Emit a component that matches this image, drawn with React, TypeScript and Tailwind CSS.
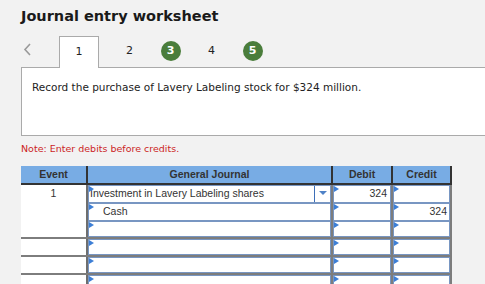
import React from "react";

const Marker = () => (
  <svg className="absolute left-0 top-0" width="5" height="6" viewBox="0 0 5 6">
    <polygon points="0,0 5,3 0,6" fill="#3d7fd6" />
  </svg>
);

type Row = { ev: string; acct: string; indent?: boolean; debit: string; credit: string; select?: boolean };

const rows: Row[] = [
  { ev: "1", acct: "Investment in Lavery Labeling shares", debit: "324", credit: "", select: true },
  { ev: "", acct: "Cash", indent: true, debit: "", credit: "324" },
  { ev: "", acct: "", debit: "", credit: "" },
  { ev: "", acct: "", debit: "", credit: "" },
  { ev: "", acct: "", debit: "", credit: "" },
  { ev: "", acct: "", debit: "", credit: "" },
];

const Cell = ({ children, className = "" }: { children?: React.ReactNode; className?: string }) => (
  <div className={"relative h-full bg-white border border-[#7896c2] flex items-center " + className}>
    <Marker />
    {children}
  </div>
);

export default function App() {
  return (
    <div className="w-[485px] h-[284px] overflow-hidden bg-[#f2f2f2] pl-[21px] pt-[6px]" style={{ fontFamily: "Verdana, 'DejaVu Sans', sans-serif" }}>
      <div className="text-[14.5px] font-bold text-[#1a1a1a] leading-[20px]">Journal entry worksheet</div>
      <div className="flex items-end h-[32px] mt-[9px] text-[11px] text-[#222]">
        <div className="w-[38px] h-full flex items-center pl-[2px] pb-[4px]">
          <svg width="9" height="13" viewBox="0 0 9 13">
            <polyline points="7,1 2,6.5 7,12" fill="none" stroke="#9a9a9a" strokeWidth="1.6" />
          </svg>
        </div>
        <div className="w-[40px] h-full bg-white border border-b-0 border-[#aaaaaa] flex items-center justify-center relative top-[1px] z-10">1</div>
        <div className="ml-[10px] w-[41px] h-full flex items-center justify-center">2</div>
        <div className="w-[41px] h-full flex items-center justify-center">
          <div className="w-[20px] h-[20px] rounded-full bg-[#4a7d3b] text-white font-bold flex items-center justify-center">3</div>
        </div>
        <div className="w-[41px] h-full flex items-center justify-center">4</div>
        <div className="w-[41px] h-full flex items-center justify-center">
          <div className="w-[20px] h-[20px] rounded-full bg-[#4a7d3b] text-white font-bold flex items-center justify-center">5</div>
        </div>
      </div>
      <div className="h-[69px] bg-white border border-r-0 border-[#aaaaaa] pl-[10px] pt-[12px] text-[10.5px] text-[#222]">
        Record the purchase of Lavery Labeling stock for $324 million.
      </div>
      <div className="mt-[6px] text-[9.5px] text-[#cc1f1f] leading-[14px]">Note: Enter debits before credits.</div>
      <div className="mt-[10px] w-[431px]" style={{ fontFamily: "'Liberation Sans', Arial, sans-serif" }}>
        <div className="grid grid-cols-[67px_245px_60px_59px] h-[19px] bg-[#78ace4] border-b-2 border-[#333] text-[10.5px] font-bold text-[#333]">
          <div className="flex items-center justify-center border-r-2 border-[#333]">Event</div>
          <div className="flex items-center justify-center border-r-2 border-[#333]">General Journal</div>
          <div className="flex items-center justify-center border-r-2 border-[#333]">Debit</div>
          <div className="flex items-center justify-center border-r-2 border-[#333]">Credit</div>
        </div>
        {rows.map((r, i) => (
          <div key={i} className="grid grid-cols-[67px_245px_60px_59px] h-[18px] border-b-2 border-[#7d7d7d] text-[10.5px] text-[#333]">
            <div className="bg-white flex items-center justify-center border-r-2 border-[#6e6e6e]">{r.ev}</div>
            <div className="border-r-2 border-[#7d7d7d] bg-[#7d7d7d]">
              <Cell className={r.indent ? "pl-[14px]" : "pl-[1px]"}>
                <span className="flex-1 truncate">{r.acct}</span>
                {r.select && (
                  <div className="h-full w-[16px] border-l border-[#3d6fb8] flex items-center justify-center">
                    <svg width="8" height="5" viewBox="0 0 8 5">
                      <polygon points="0,0 8,0 4,4" fill="#4f82c7" />
                    </svg>
                  </div>
                )}
              </Cell>
            </div>
            <div className="border-r-2 border-[#7d7d7d] bg-[#7d7d7d]">
              <Cell className="justify-end pr-[3px]">{r.debit}</Cell>
            </div>
            <div className="border-r-2 border-[#7d7d7d] bg-[#7d7d7d]">
              <Cell className="justify-end pr-[2px]">{r.credit}</Cell>
            </div>
          </div>
        ))}
      </div>
    </div>
  );
}
